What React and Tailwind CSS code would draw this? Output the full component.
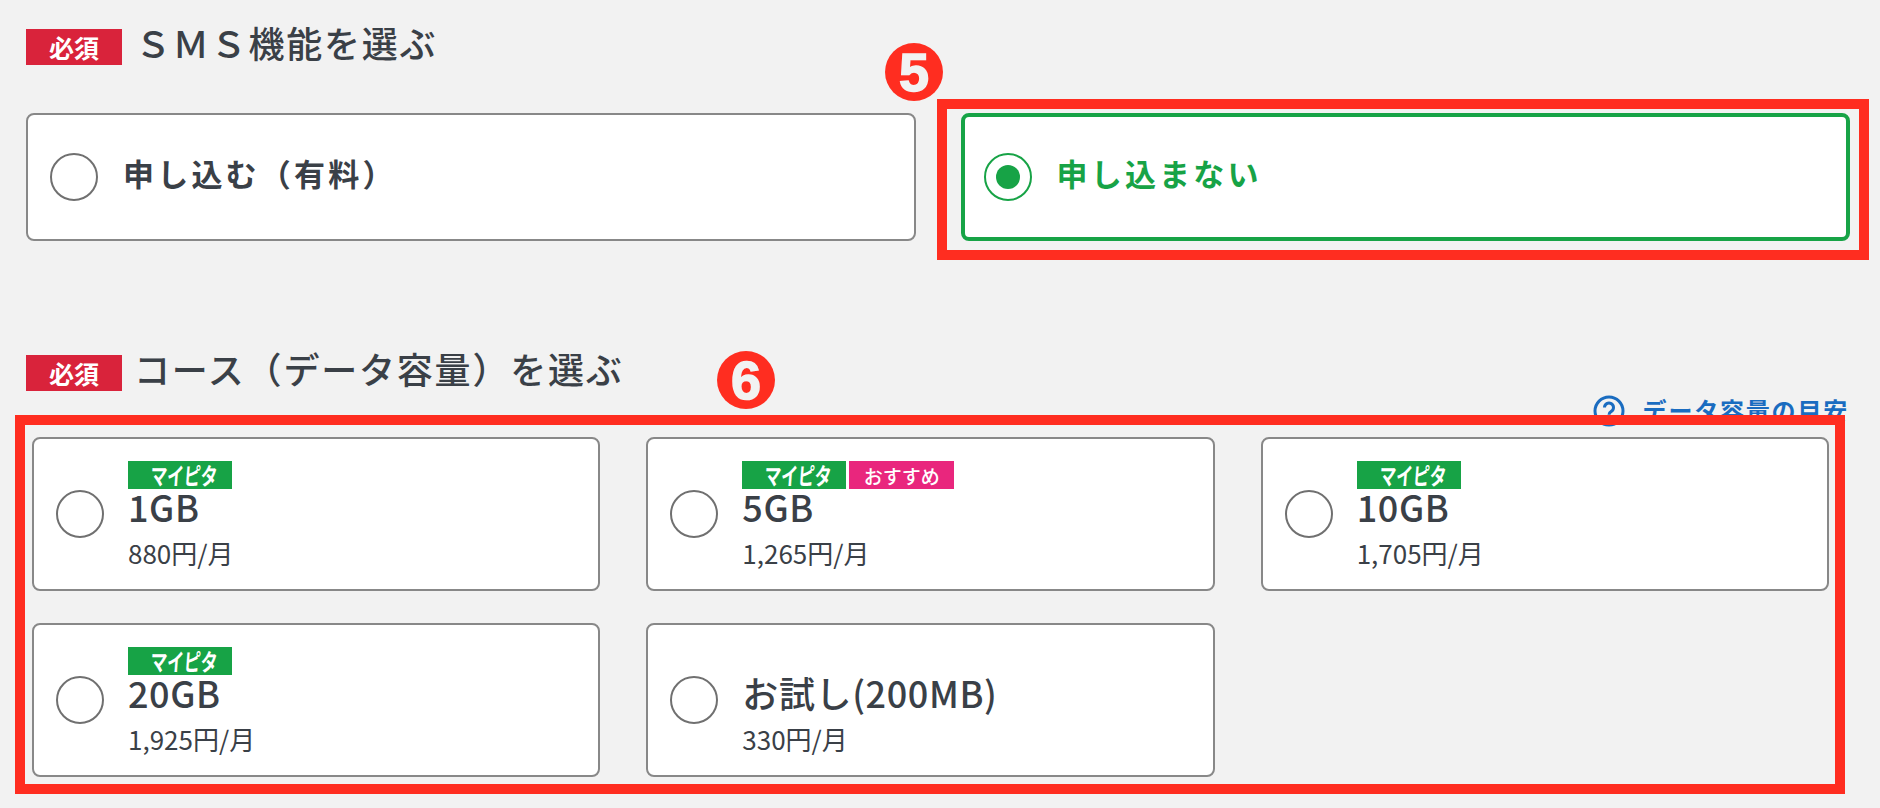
const font = { fontFamily: '"Noto Sans CJK JP", "Noto Sans", sans-serif' };

function RequiredBadge() {
  return (
    <span className="flex h-[36px] w-[96px] shrink-0 items-center justify-center bg-[#d9233b] text-[25px] font-bold leading-none text-white">
      必須
    </span>
  );
}

function SectionTitle({ children, tracking }) {
  return (
    <div className="flex h-[36px] items-center">
      <RequiredBadge />
      <h2 className={`whitespace-nowrap pb-[10px] text-[36px] font-medium leading-none text-[#3a4047] ${tracking}`}>{children}</h2>
    </div>
  );
}

function Radio({ checked }) {
  return (
    <span
      className={`flex h-[48px] w-[48px] shrink-0 items-center justify-center rounded-full bg-white ${
        checked ? "border-[2px] border-[#17a346]" : "border-[2px] border-[#707070]"
      }`}
    >
      {checked && <span className="h-[24px] w-[24px] rounded-full bg-[#17a346]" />}
    </span>
  );
}

function SmsCard({ label, checked }) {
  return (
    <div
      className={`flex h-[128px] items-center rounded-[8px] bg-white ${
        checked ? "border-[4px] border-[#17a346] pl-[19px]" : "border-[2px] border-[#888888] pl-[22px]"
      }`}
    >
      <Radio checked={checked} />
      <span
        className={`ml-[25px] whitespace-nowrap pb-[9px] text-[31px] font-bold leading-none tracking-[3.2px] ${
          checked ? "text-[#17a346]" : "text-[#3a4047]"
        }`}
      >
        {label}
      </span>
    </div>
  );
}

function MyPitaTag() {
  return (
    <span className="flex h-[28px] w-[104px] items-center justify-center bg-[#17a346] pl-[8px] text-white">
      <span className="inline-block shrink-0 -skew-x-6 scale-x-[0.7] whitespace-nowrap text-[24px] font-bold leading-none">マイピタ</span>
    </span>
  );
}

function RecommendTag() {
  return (
    <span className="flex h-[28px] w-[105px] items-center justify-center bg-[#e9267d] text-[19px] font-medium leading-none text-white">
      おすすめ
    </span>
  );
}

function CourseCard({ name, price, pita, recommend }) {
  return (
    <div className="relative flex h-[154px] items-center rounded-[8px] border-[2px] border-[#888888] bg-white pl-[22px]">
      <Radio />
      <div className="ml-[24px] flex h-full flex-col pt-[22px]">
        <div className="flex h-[28px] gap-[3px]">
          {pita && <MyPitaTag />}
          {recommend && <RecommendTag />}
        </div>
        <div className="-mt-[3px] whitespace-nowrap text-[36px] font-medium leading-[40px] tracking-[0.6px] text-[#3a4047]">{name}</div>
        <div className="mt-[13px] whitespace-nowrap text-[26px] font-normal leading-[28px] text-[#3a4047]">{price}</div>
      </div>
    </div>
  );
}

function Marker({ n, className }) {
  return (
    <span
      className={`absolute flex h-[58px] w-[58px] items-center justify-center rounded-full bg-[#ff2d20] text-[54px] font-bold leading-none text-[#f2f2f2] [-webkit-text-stroke:1.5px_#f2f2f2] ${className}`}
      style={{ fontFamily: '"Liberation Sans", sans-serif' }}
    >
      {n}
    </span>
  );
}

export default function App() {
  return (
    <div className="relative h-[808px] w-[1880px] overflow-hidden bg-[#f2f2f2] pt-[29px]" style={font}>
      <section className="pl-[26px] pr-[30px]">
        <SectionTitle tracking="ml-[13px] tracking-[1.8px]">ＳＭＳ機能を選ぶ</SectionTitle>
        <div className="mt-[48px] grid grid-cols-2 gap-[45px]">
          <SmsCard label="申し込む（有料）" />
          <SmsCard label="申し込まない" checked />
        </div>
      </section>

      <section className="mt-[114px]">
        <div className="pl-[26px]">
          <SectionTitle tracking="ml-[12px] tracking-[1.8px]">コース（データ容量）を選ぶ</SectionTitle>
        </div>
        <div className="mt-[4px] flex h-[32px] items-center justify-end gap-[18px] pr-[31px]">
          <svg width="32" height="32" viewBox="0 0 32 32" fill="none" className="shrink-0">
            <circle cx="16" cy="16" r="14" stroke="#1a6cc0" strokeWidth="3" />
            <path d="M11.5 12.5a4.5 4.5 0 1 1 6.8 3.9c-1.5.9-2.3 1.7-2.3 3.4" stroke="#1a6cc0" strokeWidth="3" />
            <circle cx="16" cy="24" r="1.8" fill="#1a6cc0" />
          </svg>
          <span className="whitespace-nowrap pb-[3px] text-[24px] font-bold leading-none tracking-[1.8px] text-[#1a6cc0]">データ容量の目安</span>
        </div>
        <div className="ml-[32px] mt-[10px] grid w-[1797px] grid-cols-3 gap-x-[46px] gap-y-[32px]">
          <CourseCard name="1GB" price="880円/月" pita />
          <CourseCard name="5GB" price="1,265円/月" pita recommend />
          <CourseCard name="10GB" price="1,705円/月" pita />
          <CourseCard name="20GB" price="1,925円/月" pita />
          <CourseCard name="お試し(200MB)" price="330円/月" />
        </div>
      </section>

      <div className="pointer-events-none absolute left-[937px] top-[99px] h-[161px] w-[932px] border-[10px] border-[#ff2d20]" />
      <div className="pointer-events-none absolute left-[15px] top-[415px] h-[379px] w-[1830px] border-[10px] border-[#ff2d20]" />
      <Marker n="5" className="left-[885px] top-[43px]" />
      <Marker n="6" className="left-[717px] top-[351px]" />
    </div>
  );
}
